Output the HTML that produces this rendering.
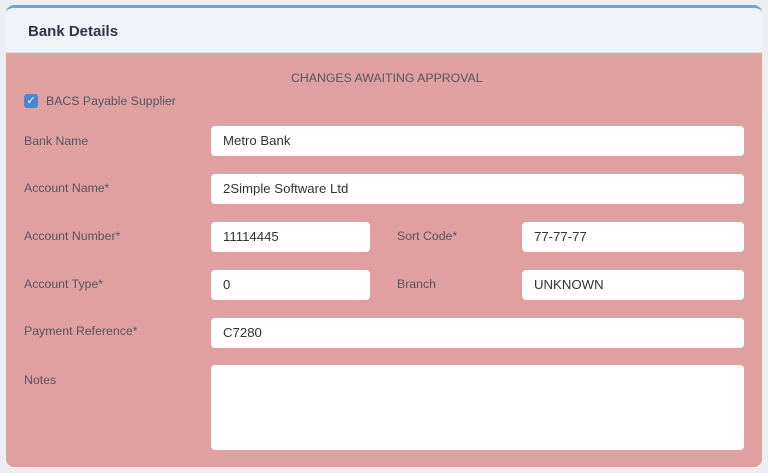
<!DOCTYPE html>
<html><head><style>
body{margin:0;width:768px;height:473px;background:#eceef1;font-family:"Liberation Sans",sans-serif;position:relative;overflow:hidden}
.card{position:absolute;left:6px;top:5px;width:756px;height:462px;border-radius:8px;overflow:hidden;background:#dfa09f;border-top:3px solid #6f9fe8;box-sizing:border-box}
.hd{height:44px;background:#f0f4f9;border-bottom:1px solid #d8dde4}
.hd span{position:absolute;left:22px;top:15px;font-size:15px;font-weight:bold;color:#2d3748}
.t{position:absolute;font-size:12.3px;color:#585460}
.in{position:absolute;background:#fff;border-radius:4px;height:30px;font-size:13.2px;color:#333;line-height:30px;padding-left:12px;box-sizing:border-box}
</style></head><body>
<div class="card"><div class="hd"><span>Bank Details</span></div></div>
<div class="t" style="left:291px;top:71px">CHANGES AWAITING APPROVAL</div>
<div style="position:absolute;left:24px;top:94px;width:14px;height:14px;background:#4b86d6;border-radius:3px;color:#fff;font-size:11px;line-height:14px;text-align:center">✓</div>
<div class="t" style="left:46px;top:94px">BACS Payable Supplier</div>
<div class="t" style="left:24px;top:134px">Bank Name</div>
<div class="in" style="left:211px;top:126px;width:533px">Metro Bank</div>
<div class="t" style="left:24px;top:181px">Account Name*</div>
<div class="in" style="left:211px;top:174px;width:533px">2Simple Software Ltd</div>
<div class="t" style="left:24px;top:229px">Account Number*</div>
<div class="in" style="left:211px;top:222px;width:159px">11114445</div>
<div class="t" style="left:397px;top:229px">Sort Code*</div>
<div class="in" style="left:522px;top:222px;width:222px">77-77-77</div>
<div class="t" style="left:24px;top:277px">Account Type*</div>
<div class="in" style="left:211px;top:270px;width:159px">0</div>
<div class="t" style="left:397px;top:277px">Branch</div>
<div class="in" style="left:522px;top:270px;width:222px">UNKNOWN</div>
<div class="t" style="left:24px;top:324px">Payment Reference*</div>
<div class="in" style="left:211px;top:318px;width:533px">C7280</div>
<div class="t" style="left:24px;top:373px">Notes</div>
<div class="in" style="left:211px;top:365px;width:533px;height:85px"></div>
</body></html>
